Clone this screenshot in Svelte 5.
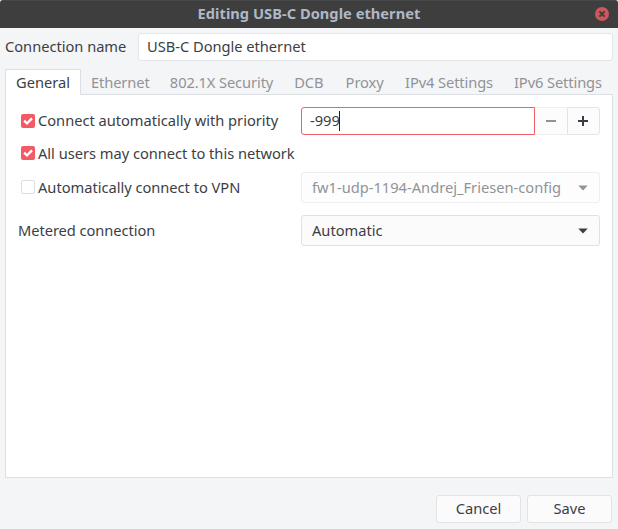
<script>
  const tabs = ['General', 'Ethernet', '802.1X Security', 'DCB', 'Proxy', 'IPv4 Settings', 'IPv6 Settings'];
  let active = $state('General');
</script>

{#snippet check(on)}
  <span class="check" class:on>
    {#if on}
      <svg width="14" height="14" viewBox="0 0 14 14"><path d="M3.1 6.7 L6 9.4 L11 4.4" fill="none" stroke="#fff" stroke-width="2.3" /></svg>
    {/if}
  </span>
{/snippet}

{#snippet arrow()}
  <svg class="arrow" width="10" height="6" viewBox="0 0 10 6"><path d="M0.3 0.5H9.7L5 5.5Z" fill="currentColor" /></svg>
{/snippet}

<div class="window">
  <header>
    <span class="title">Editing USB-C Dongle ethernet</span>
    <svg class="close" width="14" height="14" viewBox="0 0 14 14">
      <circle cx="7" cy="7" r="7" fill="#cc575d" />
      <path d="M4.4 4.4L9.6 9.6M9.6 4.4L4.4 9.6" stroke="#3e3e3e" stroke-width="2" />
    </svg>
  </header>

  <div class="name-row">
    <span class="name-label">Connection name</span>
    <div class="entry name">USB-C Dongle ethernet</div>
  </div>

  <nav>
    {#each tabs as tab}
      <button class="tab" class:active={tab === active} onclick={() => (active = tab)}>{tab}</button>
    {/each}
  </nav>

  <main>
    <div class="row first">
      <div class="label">{@render check(true)}<span class="raised">Connect automatically with priority</span></div>
      <div class="spin">
        <div class="entry focus">-999<i class="caret"></i></div>
        <div class="step minus"><svg width="10" height="10" viewBox="0 0 10 10"><path d="M0 4H10V6H0Z" fill="#919398" /></svg></div>
        <div class="step plus"><svg width="10" height="10" viewBox="0 0 10 10"><path d="M4 0H6V4H10V6H6V10H4V6H0V4H4Z" fill="#3b3e45" /></svg></div>
      </div>
    </div>
    <div class="row users">
      <div class="label">{@render check(true)}<span>All users may connect to this network</span></div>
    </div>
    <div class="row vpn">
      <div class="label">{@render check(false)}<span class="raised">Automatically connect to VPN</span></div>
      <div class="combo disabled"><span>fw1-udp-1194-Andrej_Friesen-config</span>{@render arrow()}</div>
    </div>
    <div class="row metered">
      <div class="label plain"><span class="raised">Metered connection</span></div>
      <div class="combo"><span>Automatic</span>{@render arrow()}</div>
    </div>
  </main>

  <footer>
    <button class="action">Cancel</button>
    <button class="action">Save</button>
  </footer>
</div>

<style>
  :global(body) { margin: 0; background: #f4f5f7; }
  .window, .window :global(*) { box-sizing: border-box; }
  .window {
    width: 618px; height: 529px; display: flex; flex-direction: column;
    background: #f4f5f7; color: #3b3e45;
    font: 14.667px/20px "Noto Sans", sans-serif; letter-spacing: -0.02px; white-space: nowrap; overflow: hidden;
  }
  button { font: inherit; color: inherit; letter-spacing: inherit; margin: 0; }
  svg { display: block; flex: none; }
  header {
    height: 28px; flex: none; position: relative; display: flex; align-items: center; justify-content: center;
    background: #3e3e3e; border-top: 1px solid #484848; border-radius: 3px 3px 0 0;
    color: #afb8c5; font-weight: 700; letter-spacing: 0.02px;
  }
  .title { padding-bottom: 4px; }
  .close { position: absolute; right: 9px; top: 6px; }
  .name-row { display: flex; align-items: center; height: 28px; margin: 5px 5px 0; flex: none; }
  .name-label { width: 133px; padding-bottom: 2px; }
  .entry {
    height: 28px; border: 1px solid #e3e5e8; border-radius: 3px; background: #fff;
    padding: 0 8px 2px; display: flex; align-items: center;
  }
  .name { flex: 1; }
  nav { display: flex; margin: 8px 5px 0; height: 26px; flex: none; position: relative; z-index: 1; }
  .tab {
    height: 26px; padding: 0 9px 2px 10px; border: 1px solid transparent; border-bottom: 0;
    background: none; color: #919398; line-height: 20px; letter-spacing: -0.1px; flex: none;
  }
  .tab.active { width: 76px; padding: 0 0 2px 10px; text-align: left; color: #3b3e45; background: #fff; border-color: #dcdfe3; letter-spacing: 0; margin-right: -1px; }
  .tab:nth-child(3) { margin-left: -0.8px; }
  .tab:nth-child(5) { margin-left: 1.2px; }
  .tab:nth-child(6) { margin-left: 0.5px; }
  main {
    height: 384px; margin: -1px 5px 0; flex: none; border: 1px solid #dcdfe3; background: #fff;
    padding: 12px 12px 0;
  }
  .row { display: flex; align-items: center; }
  .first { height: 28px; }
  .users { height: 20px; margin-top: 8px; }
  .vpn { height: 31px; margin-top: 9px; }
  .metered { height: 31px; margin-top: 12px; }
  .label { width: 283px; flex: none; padding-left: 3px; display: flex; align-items: center; gap: 3px; }
  .label.plain { padding-left: 0; letter-spacing: -0.06px; }
  .raised { margin: -1px 0 1px; }
  .check { width: 14px; height: 14px; border: 1px solid #dcdfe3; border-radius: 2px; background: #fff; flex: none; }
  .check.on { border: 0; background: #f25b66; }
  .vpn .check { margin-top: -1px; }
  .spin { display: flex; width: 299px; }
  .focus { width: 234px; border-color: #f0606a; border-radius: 3px 0 0 3px; }
  .caret { width: 1px; height: 20px; margin: 1px 0 -1px -1px; background: #202226; }
  .step {
    height: 28px; border: 1px solid #efeff1; border-left: 0; background: #fcfcfc;
    display: flex; align-items: center; justify-content: center;
  }
  .minus { width: 32px; border-right: 0; }
  .plus { width: 33px; border: 1px solid #e3e4e7; border-radius: 0 3px 3px 0; padding-right: 1px; }
  .combo {
    width: 299px; height: 31px; border: 1px solid #dfe1e4; border-radius: 3px; background: #fbfbfb;
    padding: 0 11px 0 10px; display: flex; align-items: center; justify-content: space-between;
  }
  .combo > span { margin: -1px 0 1px; }
  .disabled { color: #919398; border-color: #efeff1; background: #fdfdfd; letter-spacing: 0; }
  footer { display: flex; justify-content: flex-end; gap: 6px; margin: 17px 6px 0; flex: none; }
  .action {
    width: 85px; height: 28px; border: 1px solid #e1e3e6; border-radius: 3px; background: #fbfbfb; padding: 0 0 2px;
  }
</style>
